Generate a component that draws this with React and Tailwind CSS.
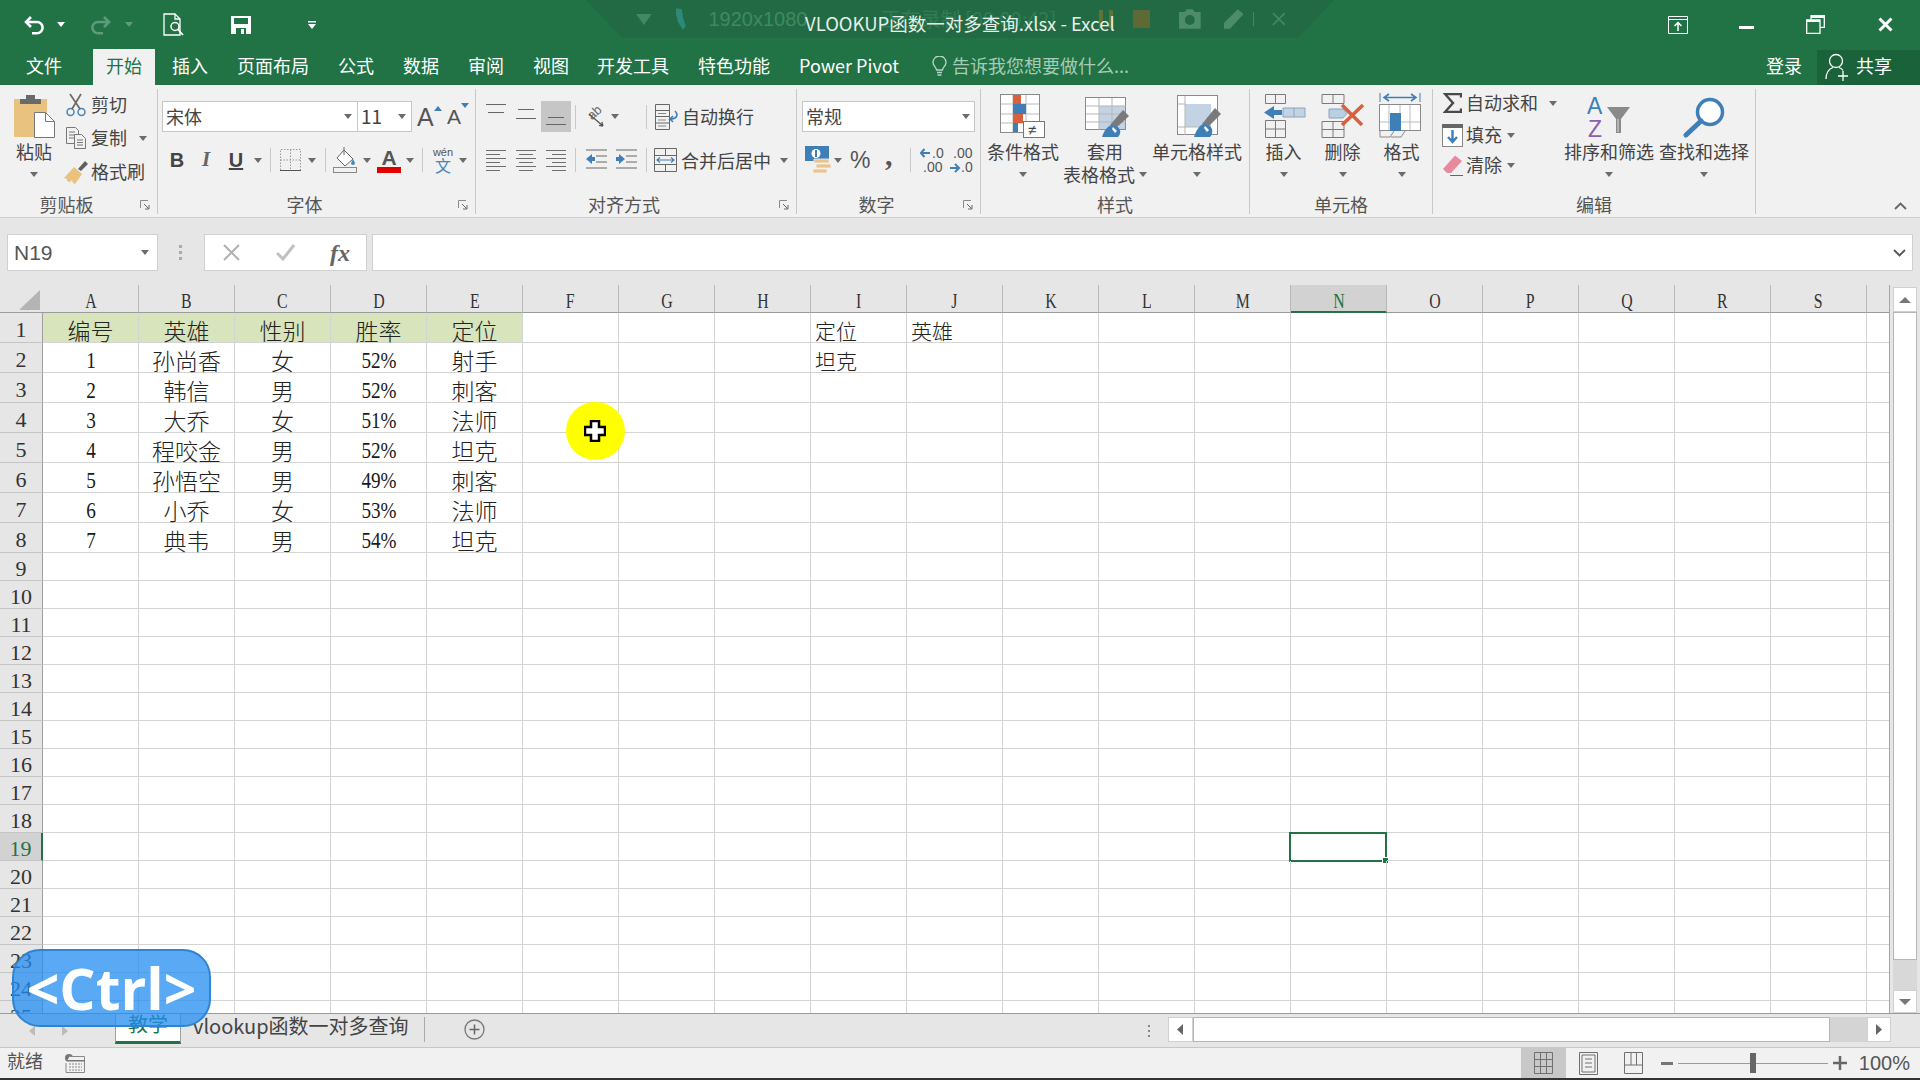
import React from "react";

const CJK = "font-['Noto_Sans_CJK_SC','Liberation_Sans',sans-serif]";
const SERIF = "font-['Liberation_Serif','Noto_Sans_CJK_SC',serif]";

function Caret({ className = "", color = "#6b6b6b" }) {
  return (
    <svg width="8" height="5" viewBox="0 0 8 5" className={`shrink-0 ${className}`}>
      <path d="M0 0h8L4 5z" fill={color} />
    </svg>
  );
}

function Sep({ className = "" }) {
  return <div className={`w-px h-[24px] bg-[#c9c9c9] shrink-0 ${className}`} />;
}

function Launcher() {
  return (
    <svg width="10" height="10" viewBox="0 0 10 10" className="mb-[1px]">
      <path d="M.5 8V.5H8" fill="none" stroke="#8a8a8a" />
      <path d="M4 4l4.5 4.5M5 9h4V5" fill="none" stroke="#666" />
    </svg>
  );
}

function Group({ w, label, launcher, children }) {
  return (
    <div className={`flex flex-col h-[125px] mt-[4px] border-r border-[#c8c8c8] shrink-0 ${w}`}>
      <div className="h-[107px]">{children}</div>
      <div className="flex items-center h-[18px]">
        <div className="flex-1 text-center text-[18px] leading-[18px] mb-[2px] text-[#555]">{label}</div>
        {launcher ? <div className="flex justify-center w-[24px]"><Launcher /></div> : null}
      </div>
    </div>
  );
}

function BigButton({ w, icon, line1, line2, caretInline, iconClass = "" }) {
  return (
    <div className={`flex flex-col items-center shrink-0 ${w}`}>
      <div className={`h-[44px] mt-[5px] flex items-end justify-center ${iconClass}`}>{icon}</div>
      <div className="mt-[2px] h-[22px] leading-[22px] text-[18px] text-[#444] whitespace-nowrap">{line1}</div>
      <div className="mt-[1px] h-[22px] flex items-center justify-center text-[18px] text-[#444] whitespace-nowrap">
        {line2}
        {line2 ? <Caret className={caretInline ? "ml-[4px]" : ""} /> : <Caret />}
      </div>
    </div>
  );
}

const Undo = ({ c = "#fff" }) => (
  <svg width="21" height="20" viewBox="0 0 21 20">
    <path d="M7 2L2 7l5 5" fill="none" stroke={c} strokeWidth="2.6" />
    <path d="M2.5 7H13a5.6 5.6 0 0 1 0 11.2H8" fill="none" stroke={c} strokeWidth="2.6" />
  </svg>
);
const Redo = () => (
  <svg width="21" height="20" viewBox="0 0 21 20">
    <path d="M14 2l5 5-5 5" fill="none" stroke="#5c9c7c" strokeWidth="2.6" />
    <path d="M18.5 7H8a5.6 5.6 0 0 0 0 11.2h5" fill="none" stroke="#5c9c7c" strokeWidth="2.6" />
  </svg>
);
const Preview = () => (
  <svg width="22" height="23" viewBox="0 0 22 23">
    <path d="M1 1h11l5 5v16H1z" fill="none" stroke="#fff" strokeWidth="1.3" />
    <path d="M12 1v5h5" fill="none" stroke="#fff" strokeWidth="1.3" />
    <circle cx="12" cy="13.5" r="4" fill="#217346" stroke="#fff" strokeWidth="1.5" />
    <path d="M15 16.5l5 5.5" stroke="#fff" strokeWidth="1.8" />
  </svg>
);
const Save = () => (
  <svg width="20" height="20" viewBox="0 0 20 20">
    <path d="M0 1h20v18H0z" fill="#fff" />
    <path d="M3 3h14v6H3z" fill="#217346" />
    <path d="M5 13h10v6H5z" fill="#217346" />
    <path d="M10 14h3v5h-3z" fill="#fff" />
  </svg>
);

function TitleBar() {
  return (
    <div className="relative flex items-center h-[49px] bg-[#217346] shrink-0">
      <svg width="760" height="38" viewBox="0 0 760 38" className="absolute left-[586px] top-0">
        <path d="M0 0H748L712 38H36z" fill="#226a43" />
      </svg>
      <div className="absolute left-[636px] top-0 h-[38px] w-[650px] flex items-center text-[#3e8a62]">
        <svg width="16" height="11" viewBox="0 0 16 11"><path d="M0 0h16L8 11z" fill="#3e8a62" /></svg>
        <svg width="16" height="24" viewBox="0 0 16 24" className="ml-[20px]"><path d="M4 1l6 1 1 8 3 9-3 4-5-8-2-8z" fill="#2e8a78" /></svg>
        <span className="ml-[21px] text-[20px] font-['Liberation_Sans',sans-serif]">1920x1080</span>
        <span className="ml-[73px] text-[20px] text-[#2f7d54] whitespace-nowrap">正在录制 [00:00:42]</span>
        <div className="ml-[43px] w-[14px] h-[18px] border-x-[4px] border-[#5d7436]" />
        <div className="ml-[20px] w-[17px] h-[18px] bg-[#5d6a35]" />
        <svg width="22" height="20" viewBox="0 0 22 20" className="ml-[29px]"><path d="M0 3h6l2-3h6l2 3h6v17H0z" fill="#4c8c68" /><circle cx="11" cy="11" r="5" fill="#226a43" /></svg>
        <svg width="20" height="20" viewBox="0 0 20 20" className="ml-[23px]"><path d="M14 0l6 5L6 20H0v-6z" fill="#4c8c68" /></svg>
        <div className="ml-[10px] w-px h-[14px] bg-[#3e8a62]" />
        <svg width="14" height="14" viewBox="0 0 14 14" className="ml-[18px]"><path d="M1 1l12 12M13 1L1 13" stroke="#3e8a62" strokeWidth="1.6" /></svg>
      </div>

      <div className="relative flex items-center w-[320px] shrink-0">
        <div className="ml-[24px] flex"><Undo /></div>
        <Caret className="ml-[12px]" color="#fff" />
        <div className="ml-[25px] flex"><Redo /></div>
        <Caret className="ml-[14px]" color="#5c9c7c" />
        <div className="ml-[30px] flex"><Preview /></div>
        <div className="ml-[46px] flex"><Save /></div>
        <svg width="8" height="8" viewBox="0 0 8 8" className="ml-[57px]"><path d="M0 0h8v1.4H0zM0 3h8L4 8z" fill="#fff" /></svg>
      </div>
      <div className="relative ml-[485px] mb-[3px] text-[18.5px] leading-[26px] text-[#e6f0ea] whitespace-nowrap">VLOOKUP函数一对多查询.xlsx - Excel</div>
      <div className="relative ml-auto flex items-center pr-[27px]">
        <svg width="20" height="18" viewBox="0 0 20 18"><path d="M.5.500h19v17H.5z" fill="none" stroke="#fff" /><path d="M.5 3.500h19" stroke="#fff" /><path d="M10 15V7M6.500 10L10 6.500l3.500 3.500" fill="none" stroke="#fff" strokeWidth="1.5" /></svg>
        <div className="ml-[51px] mt-[6px] w-[15px] h-[3px] bg-white" />
        <svg width="19" height="19" viewBox="0 0 19 19" className="ml-[52px]"><path d="M5 4.500V.7h13.300v11.600H14" fill="none" stroke="#fff" strokeWidth="1.3" /><path d="M.7 5h13.300v13.300H.7z" fill="none" stroke="#fff" strokeWidth="1.3" /><path d="M.7 6h13.300" stroke="#fff" strokeWidth="2" /><path d="M5 2h13.300" stroke="#fff" strokeWidth="2" /></svg>
        <svg width="15" height="15" viewBox="0 0 15 15" className="ml-[53px]"><path d="M1.500 1.500l12 12M13.500 1.500l-12 12" stroke="#fff" strokeWidth="3" /></svg>
      </div>
    </div>
  );
}

function TabRow() {
  const T = "mb-[4px] text-[18px] text-white whitespace-nowrap";
  return (
    <div className="flex items-center h-[36px] bg-[#217346] shrink-0">
      <span className={`ml-[26px] ${T}`}>文件</span>
      <div className="ml-[31px] h-[36px] px-[13px] pb-[4px] bg-[#f1f1f1] flex items-center text-[18px] text-[#217346]">开始</div>
      <span className={`ml-[17px] ${T}`}>插入</span>
      <span className={`ml-[29px] ${T}`}>页面布局</span>
      <span className={`ml-[29px] ${T}`}>公式</span>
      <span className={`ml-[29px] ${T}`}>数据</span>
      <span className={`ml-[29px] ${T}`}>审阅</span>
      <span className={`ml-[29px] ${T}`}>视图</span>
      <span className={`ml-[28px] ${T}`}>开发工具</span>
      <span className={`ml-[29px] ${T}`}>特色功能</span>
      <span className={`ml-[29px] ${T}`}>Power Pivot</span>
      <svg width="15" height="21" viewBox="0 0 15 21" className="ml-[33px] mb-[2px]">
        <path d="M4.500 14c0-3-3.500-4-3.500-7.500a6.500 6.500 0 0 1 13 0C14 10 10.500 11 10.500 14z" fill="none" stroke="#b8d4c5" strokeWidth="1.3" />
        <path d="M5 16.500h5M5.500 19h4" stroke="#b8d4c5" strokeWidth="1.6" />
      </svg>
      <span className="ml-[5px] mb-[3px] text-[18px] text-[#a6cbb7] whitespace-nowrap">告诉我您想要做什么...</span>
      <span className={`ml-auto ${T}`}>登录</span>
      <div className="ml-[15px] w-[103px] h-[35px] bg-[#19623a] flex items-center">
        <svg width="24" height="28" viewBox="0 0 24 28" className="ml-[8px]">
          <circle cx="11" cy="8" r="6.500" fill="none" stroke="#fff" strokeWidth="1.3" />
          <path d="M1 26c0-6 3-10 7-11.500M14 14.500c1.500.5 3 1.500 4 3" fill="none" stroke="#fff" strokeWidth="1.3" />
          <path d="M18 18v10M13 23h10" stroke="#fff" strokeWidth="1.3" />
        </svg>
        <span className={`ml-[7px] ${T}`}>共享</span>
      </div>
    </div>
  );
}

const IconPaste = () => (
  <svg width="41" height="44" viewBox="0 0 41 44">
    <rect x="0" y="5" width="33" height="38" fill="#e9c27f" />
    <path d="M6 10V5h6V1h9v4h6v5z" fill="#6a6a6a" />
    <path d="M20.500 18.500h11l9 9v16h-20z" fill="#fff" stroke="#777" />
    <path d="M31.500 18.500v9h9" fill="none" stroke="#777" />
  </svg>
);
const IconCut = () => (
  <svg width="20" height="24" viewBox="0 0 20 24">
    <circle cx="4.500" cy="19" r="3.500" fill="none" stroke="#4a86b8" strokeWidth="1.500" />
    <circle cx="15.500" cy="19" r="3.500" fill="none" stroke="#4a86b8" strokeWidth="1.500" />
    <path d="M6 16L15 1M14 16L4 1" stroke="#6a6a6a" strokeWidth="1.700" />
  </svg>
);
const IconCopy = () => (
  <svg width="20" height="22" viewBox="0 0 20 22">
    <path d="M.5.500h9l3 3v13H.5z" fill="#f1f1f1" stroke="#777" />
    <path d="M3 5h6M3 8h7M3 11h7" stroke="#777" />
    <path d="M8.500 7.500h7l4 4v10h-11z" fill="#f1f1f1" stroke="#777" />
    <path d="M11 13h6M11 15.500h6M11 18h6" stroke="#777" />
  </svg>
);
const IconBrush = () => (
  <svg width="24" height="24" viewBox="0 0 24 24">
    <path d="M14 9l7-8 3 3-7 7z" fill="#5f5f5f" />
    <path d="M10 7l8 7-7 10-2-1-1-3-2 2-3-1 0-2-3-1z" fill="#eac27c" />
  </svg>
);

function SmallRow({ h, icon, text, caret, iconW = "w-[24px]", caretMl = "ml-[9px]" }) {
  return (
    <div className={`flex items-center text-[18px] text-[#444] whitespace-nowrap ${h}`}>
      <div className={`flex justify-center shrink-0 ${iconW}`}>{icon}</div>
      <span className="ml-[3px] mb-[2px]">{text}</span>
      {caret ? <Caret className={caretMl} /> : null}
    </div>
  );
}

function Lines({ kind }) {
  if (kind === "top") return <svg width="20" height="31" viewBox="0 0 20 31"><path d="M0 3.500h20M2 11.500h16" stroke="#666" /></svg>;
  if (kind === "mid") return <svg width="20" height="31" viewBox="0 0 20 31"><path d="M2 8.500h16M0 17.500h20" stroke="#666" /></svg>;
  if (kind === "bot") return <svg width="20" height="31" viewBox="0 0 20 31"><path d="M2 16.500h16M0 23.500h20" stroke="#666" /></svg>;
  const inner = {
    left: "M0 1.500h20M0 5.500h14M0 9.500h20M0 13.500h14M0 17.500h20M0 21.500h14",
    center: "M0 1.500h20M3 5.500h14M0 9.500h20M3 13.500h14M0 17.500h20M3 21.500h14",
    right: "M0 1.500h20M6 5.500h14M0 9.500h20M6 13.500h14M0 17.500h20M6 21.500h14",
  };
  return (
    <svg width="20" height="23" viewBox="0 0 20 23" className="shrink-0">
      <path d={inner[kind]} stroke="#6f6f6f" />
    </svg>
  );
}

const IconBorders = () => (
  <svg width="21" height="22" viewBox="0 0 21 22">
    <path d="M.5 21V.5H20.500V21M.5 11h20M10.500 .5V21" fill="none" stroke="#9a9a9a" strokeDasharray="1.500 1.500" />
    <path d="M0 21.500h21" stroke="#555" />
  </svg>
);
const IconFill = () => (
  <svg width="24" height="26" viewBox="0 0 24 26">
    <path d="M11 3l9 9-8 7-8-8z" fill="#fff" stroke="#666" />
    <path d="M11 0v8" stroke="#666" />
    <path d="M20 12l2 4a2 2 0 0 1-4 0z" fill="#4a86b8" />
    <rect x=".5" y="20.500" width="23" height="5" fill="#f1f1f1" stroke="#888" />
  </svg>
);
const IconWen = () => (
  <div className="flex flex-col items-center w-[20px] leading-none text-[#4a86b8]">
    <span className="text-[11px] leading-[11px] text-[#555] font-['Liberation_Sans',sans-serif]">wén</span>
    <span className="text-[16px] leading-[15px]">文</span>
  </div>
);
const IconOrient = () => (
  <svg width="20" height="20" viewBox="0 0 20 20">
    <text x="2" y="10" fontSize="13" fill="#666" transform="rotate(-42 8 8)" fontFamily="Liberation Sans">ab</text>
    <path d="M2 7l14 12M16 19l-4-.7M16 19l-1.200-4" stroke="#555" fill="none" strokeWidth="1.300" />
  </svg>
);
const IconIndent = ({ dir }) => (
  <svg width="22" height="22" viewBox="0 0 22 22">
    <path d="M1 1h21M11 7h11M11 13h11M1 19h21" stroke="#666" />
    <path d={dir === "l" ? "M1 10l6-5v3h3v4H7v3z" : "M10 10L4 5v3H1v4h3v3z"} fill="#3f7fb8" />
  </svg>
);
const IconWrap = () => (
  <svg width="23" height="26" viewBox="0 0 23 26">
    <path d="M.5.500h14v25H.5zM.5 6.500h14M.5 12.500h14M.5 19h14" fill="none" stroke="#666" />
    <path d="M3 9.500h8M3 16h8M3 22h8" stroke="#888" />
    <path d="M20 7c3 3 3 8-5 8l3-3m-3 3l3 3" fill="none" stroke="#3f7fb8" strokeWidth="1.600" />
  </svg>
);
const IconMerge = () => (
  <svg width="23" height="24" viewBox="0 0 23 24">
    <path d="M.5.500h22v23H.5zM.5 7.500h22M.5 16.500h22M11.500.5v7M11.500 16.500v7" fill="none" stroke="#666" />
    <path d="M3 12h17M6 9.500L3 12l3 2.500M17 9.500l3 2.500-3 2.500" fill="none" stroke="#3f7fb8" strokeWidth="1.200" />
  </svg>
);
const IconCurrency = () => (
  <svg width="26" height="28" viewBox="0 0 26 28">
    <rect width="24" height="15" fill="#3f7fb8" />
    <circle cx="11" cy="7.500" r="4.500" fill="#fff" />
    <rect x="10" y="4" width="2" height="7" fill="#3f7fb8" />
    <path d="M9 13h15v4H9zM11 18h15v4H11zM8 23h14v4H8z" fill="#eac48a" stroke="#f1f1f1" strokeWidth=".8" />
  </svg>
);
const IconDec = () => (
  <svg width="54" height="28" viewBox="0 0 54 28">
    <path d="M1 7h9M4.500 3L.8 7l3.700 4" stroke="#3f7fb8" fill="none" strokeWidth="2" />
    <text x="12" y="12" fontSize="14" fill="#555" fontFamily="Liberation Sans">.0</text>
    <text x="3" y="26" fontSize="14" fill="#555" fontFamily="Liberation Sans">.00</text>
    <text x="33" y="12" fontSize="14" fill="#555" fontFamily="Liberation Sans">.00</text>
    <path d="M30 22h9M35 18l4 4-4 4" stroke="#3f7fb8" fill="none" strokeWidth="2" />
    <text x="41" y="26" fontSize="14" fill="#555" fontFamily="Liberation Sans">.0</text>
  </svg>
);
const IconCond = () => (
  <svg width="46" height="44" viewBox="0 0 46 44">
    <rect x=".5" y=".5" width="39" height="38" fill="#fff" stroke="#8a8a8a" />
    <path d="M13 1v37M26 1v37M1 10h38M1 20h38M1 29h38" stroke="#bbb" />
    <rect x="13" y="1" width="8" height="9" fill="#d9603c" />
    <rect x="13" y="10" width="13" height="10" fill="#3f7fb8" />
    <rect x="13" y="20" width="10" height="9" fill="#d9603c" />
    <rect x="13" y="29" width="5" height="9" fill="#3f7fb8" />
    <rect x="23.500" y="27.500" width="21" height="16" fill="#fff" stroke="#777" />
    <text x="28" y="41" fontSize="15" fill="#444" fontFamily="Liberation Sans">≠</text>
  </svg>
);
const IconTable = () => (
  <svg width="44" height="41" viewBox="0 0 44 41">
    <rect x=".5" y=".5" width="40" height="32" fill="#fff" stroke="#8a8a8a" />
    <path d="M14 9h26v23H14z" fill="#c3d3e4" />
    <path d="M14 1v32M27 1v32M1 9h40M1 17h40M1 25h40" stroke="#b5b5b5" />
    <path d="M38 13l6 6-14 13-5-4z" fill="#7a7a7a" />
    <path d="M27 28c-5 1-8 6-10 12h16c3-3 3-7 0-10z" fill="#3f7fb8" />
    <path d="M28 30l4 4-2 2-3-4z" fill="#fff" />
  </svg>
);
const IconCellStyle = () => (
  <svg width="44" height="43" viewBox="0 0 44 43">
    <rect x=".5" y=".5" width="40" height="39" fill="#fff" stroke="#8a8a8a" />
    <path d="M8 9h26v23H8z" fill="#c3d3e4" />
    <path d="M8 1v39M1 9h7M1 32h30" stroke="#b5b5b5" />
    <path d="M38 13l6 6-14 14-5-4z" fill="#7a7a7a" />
    <path d="M27 29c-5 1-8 7-10 13h16c3-3 3-8 0-11z" fill="#3f7fb8" />
    <path d="M28 31l4 4-2 2-3-4z" fill="#fff" />
  </svg>
);
const IconInsert = () => (
  <svg width="44" height="44" viewBox="0 0 44 44">
    <path d="M3.500 .5h20v9h-20zM13.500 .5v9M3.500 26.500h20v17h-20zM3.500 35h20M13.500 26.500v17" fill="none" stroke="#7a7a7a" />
    <path d="M12 12l-10 6.500L12 25v-4h8v-5h-8z" fill="#3f7fb8" />
    <path d="M21 14h22v9H21zM32 14v9" fill="#c3d3e4" stroke="#8aa4bc" />
  </svg>
);
const IconDelete = () => (
  <svg width="44" height="44" viewBox="0 0 44 44">
    <path d="M1 .5h22v9H1zM12 .5v9M1 27.500h22v16H1zM1 35.500h22M12 27.500v16" fill="none" stroke="#7a7a7a" />
    <path d="M8 15h14l4 4.500-4 4.500H8z" fill="#b9cfe2" stroke="#8aa4bc" />
    <path d="M21 11l20 20M42 11L21 31" stroke="#d9603c" strokeWidth="3.500" />
  </svg>
);
const IconFormat = () => (
  <svg width="42" height="46" viewBox="0 0 42 46">
    <path d="M1 1v9M41 1v9" stroke="#3f7fb8" />
    <path d="M6 5.500h30M10 2L5 5.500 10 9M32 2l5 3.500L32 9" fill="none" stroke="#3f7fb8" strokeWidth="1.600" />
    <rect x=".5" y="12.500" width="41" height="26" fill="#fff" stroke="#8a8a8a" />
    <path d="M10 13v25M21 13v25M31 13v25M1 30h40" stroke="#bbb" />
    <rect x="11" y="21" width="11" height="18" fill="#3f7fb8" />
    <path d="M1 39v6h10l4-6M12 45h10l4-6" fill="none" stroke="#8a8a8a" />
  </svg>
);
const IconSigma = () => (
  <svg width="19" height="20" viewBox="0 0 19 20"><path d="M18 4.500V1H2l8 9-8 9h16v-3.500" fill="none" stroke="#4a4a4a" strokeWidth="2.400" /></svg>
);
const IconFillDown = () => (
  <svg width="21" height="23" viewBox="0 0 21 23">
    <rect x=".5" y="2" width="20" height="20.500" fill="#fff" stroke="#888" />
    <rect width="21" height="4" fill="#666" />
    <path d="M10.500 6v11M6 13l4.500 5 4.500-5" fill="none" stroke="#3f7fb8" strokeWidth="2.400" />
  </svg>
);
const IconEraser = () => (
  <svg width="21" height="21" viewBox="0 0 21 21">
    <path d="M13 .5l7 5.500L9 18H5l-4-4z" fill="#e88a9e" />
    <path d="M8 20.500h13" stroke="#666" />
  </svg>
);
const IconSort = () => (
  <svg width="44" height="42" viewBox="0 0 44 42">
    <text x="0" y="18" fontSize="23" fill="#3f7fb8" fontFamily="Liberation Sans">A</text>
    <text x="1" y="41" fontSize="23" fill="#8a5fb0" fontFamily="Liberation Sans">Z</text>
    <path d="M20 11h23l-9 12v14h-5V23z" fill="#8a8a8a" />
    <path d="M31 23v13" stroke="#ddd" />
  </svg>
);
const IconFind = () => (
  <svg width="42" height="41" viewBox="0 0 42 41">
    <circle cx="27" cy="15" r="12.500" fill="#fff" stroke="#3f7fb8" strokeWidth="3.500" />
    <path d="M18 24L3 38" stroke="#3f7fb8" strokeWidth="5" strokeLinecap="round" />
  </svg>
);

function Combo({ w, text, pad = "pl-[3px]", caretPad = "pr-[5px]" }) {
  return (
    <div className={`flex items-center justify-between h-[31px] bg-white border border-[#c6c6c6] text-[18px] text-[#444] ${w} ${pad} ${caretPad}`}>
      <span>{text}</span>
      <Caret />
    </div>
  );
}

function Ribbon() {
  const row2 = "flex items-center h-[24px] mt-[16px]";
  return (
    <div className="flex h-[133px] bg-[#f1f1f1] border-b border-[#d0d0d0] shrink-0">
      <Group w="w-[158px]" label="剪贴板" launcher>
        <div className="flex">
          <div className="ml-[11px] w-[46px]">
            <BigButton w="w-[46px]" icon={<IconPaste />} line1="粘贴" />
          </div>
          <div className="ml-[7px]">
            <SmallRow h="h-[32px]" icon={<IconCut />} text="剪切" />
            <SmallRow h="h-[34px]" icon={<IconCopy />} text="复制" caret caretMl="ml-[12px]" />
            <SmallRow h="h-[34px]" icon={<IconBrush />} text="格式刷" />
          </div>
        </div>
      </Group>

      <Group w="w-[318px]" label="字体" launcher>
        <div className="flex items-center h-[31px] mt-[12px] ml-[4px]">
          <Combo w="w-[196px]" text="宋体" />
          <div className="flex items-center justify-between h-[31px] w-[54px] pl-[3px] pr-[5px] bg-white border-y border-r border-[#c6c6c6] text-[19px] text-[#444]"><span>11</span><Caret /></div>
          <div className="ml-[5px] flex items-start w-[26px] text-[25px] leading-[28px] text-[#555] font-['Liberation_Sans',sans-serif]">
            A<svg width="8" height="5" viewBox="0 0 8 5" className="mt-[3px]"><path d="M0 5h8L4 0z" fill="#3f7fb8" /></svg>
          </div>
          <div className="ml-[4px] flex items-start w-[24px] text-[21px] leading-[28px] text-[#555] font-['Liberation_Sans',sans-serif]">
            A<svg width="8" height="5" viewBox="0 0 8 5"><path d="M0 0h8L4 5z" fill="#3f7fb8" /></svg>
          </div>
        </div>
        <div className={row2}>
          <span className="ml-[11px] w-[16px] text-center text-[20px] font-bold text-[#444] font-['Liberation_Sans',sans-serif]">B</span>
          <span className="ml-[13px] w-[16px] text-center text-[21px] font-bold italic text-[#666] font-['Liberation_Serif',serif]">I</span>
          <span className="ml-[13px] w-[18px] text-center text-[20px] font-bold underline text-[#444] font-['Liberation_Sans',sans-serif]">U</span>
          <Caret className="ml-[9px]" />
          <Sep className="ml-[8px]" />
          <div className="ml-[9px] flex"><IconBorders /></div>
          <Caret className="ml-[7px]" />
          <Sep className="ml-[9px]" />
          <div className="ml-[7px] flex"><IconFill /></div>
          <Caret className="ml-[6px]" />
          <div className="ml-[6px] w-[24px] flex flex-col items-center">
            <span className="text-[21px] leading-[19px] font-bold text-[#555] font-['Liberation_Sans',sans-serif]">A</span>
            <div className="w-[24px] h-[6px] bg-[#e00000]" />
          </div>
          <Caret className="ml-[5px]" />
          <Sep className="ml-[8px]" />
          <div className="ml-[10px] flex"><IconWen /></div>
          <Caret className="ml-[6px]" />
        </div>
      </Group>

      <Group w="w-[321px]" label="对齐方式" launcher>
        <div className="flex items-center h-[31px] mt-[12px]">
          <div className="ml-[10px] flex"><Lines kind="top" /></div>
          <div className="ml-[10px] flex"><Lines kind="mid" /></div>
          <div className="ml-[5px] w-[30px] h-[31px] bg-[#c6c6c6] flex justify-center"><Lines kind="bot" /></div>
          <Sep className="ml-[4px]" />
          <div className="ml-[11px] flex"><IconOrient /></div>
          <Caret className="ml-[4px]" />
          <Sep className="ml-[27px]" />
          <div className="ml-[8px] flex"><IconWrap /></div>
          <span className="ml-[4px] text-[18px] text-[#444] whitespace-nowrap">自动换行</span>
        </div>
        <div className={row2}>
          <div className="ml-[10px] flex"><Lines kind="left" /></div>
          <div className="ml-[10px] flex"><Lines kind="center" /></div>
          <div className="ml-[10px] flex"><Lines kind="right" /></div>
          <Sep className="ml-[9px]" />
          <div className="ml-[9px] flex"><IconIndent dir="l" /></div>
          <div className="ml-[8px] flex"><IconIndent dir="r" /></div>
          <Sep className="ml-[9px]" />
          <div className="ml-[7px] flex"><IconMerge /></div>
          <span className="ml-[4px] text-[18px] text-[#444] whitespace-nowrap">合并后居中</span>
          <Caret className="ml-[9px]" />
        </div>
      </Group>

      <Group w="w-[184px]" label="数字" launcher>
        <div className="flex h-[31px] mt-[12px] ml-[5px]">
          <Combo w="w-[173px]" text="常规" pad="pl-[3px]" caretPad="pr-[4px]" />
        </div>
        <div className={row2}>
          <div className="ml-[8px] flex"><IconCurrency /></div>
          <Caret className="ml-[3px]" />
          <span className="ml-[8px] w-[21px] text-[23px] text-[#555] font-['Liberation_Sans',sans-serif]">%</span>
          <span className="ml-[14px] mb-[10px] w-[10px] text-[30px] leading-[24px] font-bold text-[#555] font-['Liberation_Serif',serif]">,</span>
          <Sep className="ml-[15px]" />
          <div className="ml-[9px] flex"><IconDec /></div>
        </div>
      </Group>

      <Group w="w-[269px]" label="样式">
        <div className="flex ml-[4px]">
          <BigButton w="w-[76px]" icon={<IconCond />} line1="条件格式" />
          <BigButton w="w-[88px]" icon={<IconTable />} iconClass="ml-[4px]" line1="套用" line2="表格格式" caretInline />
          <BigButton w="w-[96px]" icon={<IconCellStyle />} iconClass="ml-[4px]" line1="单元格样式" />
        </div>
      </Group>

      <Group w="w-[183px]" label="单元格">
        <div className="flex ml-[4px]">
          <BigButton w="w-[59px]" icon={<IconInsert />} line1="插入" />
          <BigButton w="w-[59px]" icon={<IconDelete />} line1="删除" />
          <BigButton w="w-[59px]" icon={<IconFormat />} iconClass="-ml-[3px]" line1="格式" />
        </div>
      </Group>

      <Group w="w-[323px]" label="编辑">
        <div className="flex">
          <div className="ml-[8px] w-[120px]">
            <SmallRow h="h-[28px]" iconW="w-[22px]" icon={<IconSigma />} text="自动求和" caret caretMl="ml-[11px]" />
            <div className="mt-[2px]"><SmallRow h="h-[32px]" iconW="w-[22px]" icon={<IconFillDown />} text="填充" caret caretMl="ml-[5px]" /></div>
            <SmallRow h="h-[28px]" iconW="w-[22px]" icon={<IconEraser />} text="清除" caret caretMl="ml-[5px]" />
          </div>
          <BigButton w="w-[96px]" icon={<IconSort />} line1="排序和筛选" />
          <BigButton w="w-[94px]" icon={<IconFind />} line1="查找和选择" />
        </div>
      </Group>

      <div className="flex-1 flex items-end justify-end pr-[13px] pb-[7px]">
        <svg width="13" height="8" viewBox="0 0 13 8"><path d="M1 7l5.500-5.500L12 7" fill="none" stroke="#666" strokeWidth="1.800" /></svg>
      </div>
    </div>
  );
}

function FormulaBar() {
  return (
    <div className="flex h-[67px] pt-[16px] bg-[#e6e6e6] shrink-0">
      <div className="ml-[7px] w-[151px] h-[37px] bg-white border border-[#d0d0d0] flex items-center justify-between pl-[6px] pr-[8px]">
        <span className="text-[21px] text-[#555] font-['Liberation_Sans',sans-serif]">N19</span>
        <Caret />
      </div>
      <div className="ml-[21px] w-[3px] h-[37px] flex flex-col items-center justify-center gap-[3px]">
        <div className="w-[3px] h-[3px] bg-[#aaa]" />
        <div className="w-[3px] h-[3px] bg-[#aaa]" />
        <div className="w-[3px] h-[3px] bg-[#aaa]" />
      </div>
      <div className="ml-[22px] w-[163px] h-[37px] bg-white border border-[#d0d0d0] flex items-center">
        <svg width="17" height="17" viewBox="0 0 17 17" className="ml-[18px]"><path d="M1 1l15 15M16 1L1 16" stroke="#b0b0b0" strokeWidth="2" /></svg>
        <svg width="19" height="17" viewBox="0 0 19 17" className="ml-[36px]"><path d="M1 9l6 6L18 1" fill="none" stroke="#c0c0c0" strokeWidth="3" /></svg>
        <span className="ml-[35px] text-[24px] leading-none italic font-bold text-[#666] font-['Liberation_Serif',serif]">fx</span>
      </div>
      <div className="ml-[5px] w-[1541px] h-[37px] bg-white border border-[#d0d0d0] flex items-center justify-end pr-[6px]">
        <svg width="13" height="8" viewBox="0 0 13 8"><path d="M1 1l5.500 5.500L12 1" fill="none" stroke="#555" strokeWidth="1.800" /></svg>
      </div>
    </div>
  );
}

const COLS = "ABCDEFGHIJKLMNOPQRS".split("");
const DATA = [
  ["编号", "英雄", "性别", "胜率", "定位"],
  ["1", "孙尚香", "女", "52%", "射手"],
  ["2", "韩信", "男", "52%", "刺客"],
  ["3", "大乔", "女", "51%", "法师"],
  ["4", "程咬金", "男", "52%", "坦克"],
  ["5", "孙悟空", "男", "49%", "刺客"],
  ["6", "小乔", "女", "53%", "法师"],
  ["7", "典韦", "男", "54%", "坦克"],
];
const SIDE = { "1-8": "定位", "1-9": "英雄", "2-8": "坦克" };

function CellText({ t }) {
  if (/^[0-9%]+$/.test(t)) {
    return <span className={`inline-block mt-[5px] scale-x-[0.8] text-[24px] leading-none text-[#1a1a1a] ${SERIF}`}>{t}</span>;
  }
  return <span className={`mt-[5px] text-[23px] leading-none font-light text-[#222] ${CJK}`}>{t}</span>;
}

function Sheet() {
  const rows = Array.from({ length: 25 }, (_, i) => i + 1);
  return (
    <div className="flex flex-1 min-h-0 bg-[#e6e6e6]">
      <div className="w-[1890px] h-[728px] overflow-hidden border-r border-[#a6a6a6] shrink-0">
        <div className="grid grid-cols-[43px_repeat(19,96px)_22px] bg-white">
          <div className="h-[28px] bg-[#e6e6e6] border-b border-[#9b9b9b] flex items-end justify-end pr-[3px] pb-[2px]">
            <svg width="21" height="20" viewBox="0 0 21 20"><path d="M21 0v20H0z" fill="#b4b4b4" /></svg>
          </div>
          {COLS.map((c) => (
            <div
              key={c}
              className={`h-[28px] flex items-center justify-center border-r border-[#b8b8b8] ${c === "N" ? "bg-[#d2d2d2] border-b-2 border-b-[#217346]" : "bg-[#e6e6e6] border-b border-b-[#9b9b9b]"}`}
            >
              <span className={`inline-block mt-[5px] scale-x-[0.72] text-[22px] leading-none ${c === "N" ? "text-[#217346]" : "text-[#333]"} ${SERIF}`}>{c}</span>
            </div>
          ))}
          <div className="h-[28px] bg-[#e6e6e6] border-b border-[#9b9b9b]" />
          {rows.map((r) => {
            const h = r <= 8 ? "h-[30px]" : "h-[28px]";
            const sel = r === 19;
            return (
              <React.Fragment key={r}>
                <div
                  className={`${h} flex items-center justify-center border-b border-[#c4c4c4] ${sel ? "bg-[#d2d2d2] border-r-2 border-r-[#217346] text-[#217346]" : "bg-[#e6e6e6] border-r border-r-[#9f9f9f] text-[#333]"}`}
                >
                  <span className={`mt-[5px] text-[22px] leading-none ${SERIF}`}>{r}</span>
                </div>
                {COLS.map((c, ci) => {
                  const d = r <= 8 && ci < 5 ? DATA[r - 1][ci] : null;
                  const side = SIDE[`${r}-${ci}`];
                  const isSel = sel && c === "N";
                  return (
                    <div
                      key={c}
                      className={`${h} relative flex items-center border-r border-b border-[#d4d4d4] ${side ? "pl-[4px]" : "justify-center"} ${r === 1 && ci < 5 ? "bg-[#d8e4bc]" : ""}`}
                    >
                      {d ? <CellText t={d} /> : null}
                      {side ? <span className={`mt-[5px] text-[21px] leading-none font-light text-[#222] ${CJK}`}>{side}</span> : null}
                      {isSel ? (
                        <div className="absolute -left-[2px] -top-px w-[98px] h-[30px] border-2 border-[#217346]">
                          <div className="absolute -right-[4px] -bottom-[4px] w-[7px] h-[7px] bg-[#217346] border border-white" />
                        </div>
                      ) : null}
                    </div>
                  );
                })}
                <div className={`${h} border-b border-[#d4d4d4]`} />
              </React.Fragment>
            );
          })}
        </div>
      </div>
      <div className="w-[30px] pl-[3px] pt-[2px] flex flex-col">
        <div className="w-[24px] h-[25px] bg-white border border-[#d0d0d0] flex items-center justify-center">
          <svg width="12" height="6" viewBox="0 0 12 6"><path d="M0 6h12L6 0z" fill="#777" /></svg>
        </div>
        <div className="w-[24px] h-[648px] bg-white border border-[#b5b5b5]" />
        <div className="w-[24px] h-[30px] bg-[#d8d8d8]" />
        <div className="w-[24px] h-[23px] bg-white border border-[#d0d0d0] flex items-center justify-center">
          <svg width="12" height="6" viewBox="0 0 12 6"><path d="M0 0h12L6 6z" fill="#777" /></svg>
        </div>
      </div>
    </div>
  );
}

function TabsBar() {
  return (
    <div className="flex items-center h-[34px] bg-[#e6e6e6] border-t border-[#9b9b9b] shrink-0">
      <svg width="6" height="10" viewBox="0 0 6 10" className="ml-[29px]"><path d="M6 0v10L0 5z" fill="#bbb" /></svg>
      <svg width="6" height="10" viewBox="0 0 6 10" className="ml-[27px]"><path d="M0 0v10l6-5z" fill="#bbb" /></svg>
      <div className="ml-[47px] self-start w-[66px] h-[30px] pb-[8px] bg-white border-x border-[#a0a0a0] border-b-[3px] border-b-[#217346] flex items-center justify-center text-[20px] leading-none text-[#217346]">教学</div>
      <span className="ml-[12px] mb-[9px] text-[20px] leading-[26px] text-[#444] whitespace-nowrap">vlookup函数一对多查询</span>
      <div className="ml-[15px] mb-[2px] w-px h-[25px] bg-[#aaa]" />
      <svg width="21" height="21" viewBox="0 0 21 21" className="ml-[39px] mb-[3px]">
        <circle cx="10.500" cy="10.500" r="9.500" fill="none" stroke="#777" strokeWidth="1.300" />
        <path d="M10.500 5.500v10M5.500 10.500h10" stroke="#666" strokeWidth="1.500" />
      </svg>
      <div className="ml-[663px] w-[3px] flex flex-col items-center gap-[3px]">
        <div className="w-[2px] h-[2px] bg-[#888]" />
        <div className="w-[2px] h-[2px] bg-[#888]" />
        <div className="w-[2px] h-[2px] bg-[#888]" />
      </div>
      <div className="ml-[17px] mb-[2px] flex items-stretch h-[25px]">
        <div className="w-[25px] bg-white border border-[#d0d0d0] flex items-center justify-center">
          <svg width="6" height="11" viewBox="0 0 6 11"><path d="M6 0v11L0 5.500z" fill="#666" /></svg>
        </div>
        <div className="w-[637px] bg-white border border-[#b5b5b5]" />
        <div className="w-[37px] bg-[#d4d4d4]" />
        <div className="w-[24px] bg-white border border-[#d0d0d0] flex items-center justify-center">
          <svg width="6" height="11" viewBox="0 0 6 11"><path d="M0 0v11l6-5.500z" fill="#666" /></svg>
        </div>
      </div>
    </div>
  );
}

function StatusBar() {
  return (
    <div className="flex items-center h-[31px] bg-[#f1f1f1] border-t border-[#c6c6c6] shrink-0">
      <span className="ml-[7px] mb-[5px] text-[18px] text-[#555]">就绪</span>
      <svg width="20" height="19" viewBox="0 0 20 19" className="ml-[22px]">
        <circle cx="4" cy="4" r="4" fill="#777" />
        <path d="M4.500 2.500H19.500v16H1V9" fill="#f1f1f1" stroke="#888" />
        <path d="M2 6h18v1.500H2z" fill="#777" />
        <path d="M4 10h13M4 13h13M4 16h13" stroke="#888" strokeDasharray="2 1" />
      </svg>
      <div className="ml-auto flex items-center h-full">
        <div className="w-[45px] h-full bg-[#c8c8c8] flex items-center justify-center">
          <svg width="19" height="22" viewBox="0 0 19 22"><path d="M.5.500h18v21H.5zM6.500.5v21M12.500.5v21M.5 7.500h18M.5 14.500h18" fill="none" stroke="#707070" /></svg>
        </div>
        <svg width="19" height="23" viewBox="0 0 19 23" className="ml-[13px]"><path d="M.5.500h18v22H.5z" fill="none" stroke="#707070" /><path d="M3 3h13v17H3z" fill="none" stroke="#707070" /><path d="M6 7h7M6 11h7M6 15h7" stroke="#707070" /></svg>
        <svg width="19" height="22" viewBox="0 0 19 22" className="ml-[26px]"><path d="M.5.500h18v21H.5zM.5 13h18M7 .5V13M12.500 .5V13" fill="none" stroke="#707070" /></svg>
        <div className="ml-[18px] w-[12px] h-[3px] bg-[#777]" />
        <div className="ml-[5px] w-[150px] h-px bg-[#9a9a9a] flex items-center">
          <div className="ml-[72px] w-[6px] h-[20px] bg-[#666]" />
        </div>
        <svg width="14" height="14" viewBox="0 0 14 14" className="ml-[5px]"><path d="M7 0v14M0 7h14" stroke="#666" strokeWidth="2.500" /></svg>
        <span className="ml-[12px] mr-[10px] text-[20px] text-[#555] font-['Liberation_Sans',sans-serif]">100%</span>
      </div>
    </div>
  );
}

export default function App() {
  return (
    <div className={`relative w-[1920px] h-[1080px] overflow-hidden flex flex-col bg-[#e6e6e6] ${CJK}`}>
      <TitleBar />
      <TabRow />
      <Ribbon />
      <FormulaBar />
      <Sheet />
      <TabsBar />
      <StatusBar />
      <div className="h-[2px] bg-[#333] shrink-0" />

      <div className="absolute left-[566px] top-[402px] w-[59px] h-[58px] rounded-full bg-[#ffff00] flex items-center justify-center">
        <svg width="22" height="22" viewBox="0 0 22 22" className="-ml-[1px] -mt-[1px]">
          <path d="M7 1h8v6h6v8h-6v6H7v-6H1V7h6z" fill="#fff" stroke="#000" strokeWidth="2.500" />
        </svg>
      </div>

      <div className="absolute left-[12px] top-[949px] w-[199px] h-[78px] rounded-[28px] bg-[#238cf1]/75 border-2 border-[#2f84d2] flex items-center justify-center text-white text-[57px] font-bold leading-none font-['Open_Sans','Liberation_Sans',sans-serif]">
        &lt;Ctrl&gt;
      </div>
    </div>
  );
}
